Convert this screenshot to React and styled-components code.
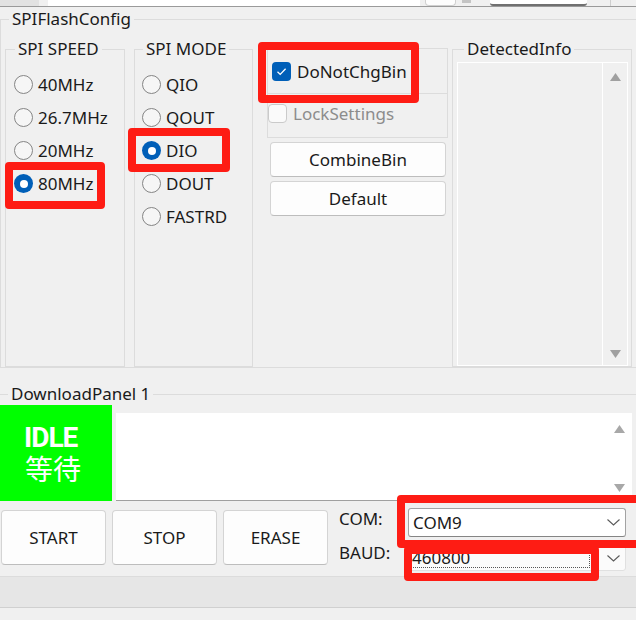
import React from 'react'
import styled, { createGlobalStyle } from 'styled-components'

const GlobalStyle = createGlobalStyle`
  html, body {
    margin: 0;
    padding: 0;
    background: #f0f0f0;
  }
  body {
    font-family: "Noto Sans", "Open Sans", sans-serif;
    font-size: 17px;
    color: #1a1a1a;
  }
`

const Window = styled.div`
  position: relative;
  width: 636px;
  height: 620px;
  overflow: hidden;
  background: #f0f0f0;
`

/* cut-off row of the previous panel */
const TopStrip = styled.div`
  display: flex;
  height: 6px;
  border-bottom: 1px solid #9a9a9a;
  margin-bottom: 1px;
`
const StripTab = styled.div`
  width: 39px;
  background: #e2e2e2;
`
const StripField = styled.div`
  width: 372px;
  margin-left: 9px;
  background: #fff;
`
const StripButton = styled.div`
  width: 31px;
  margin-left: 5px;
  box-sizing: border-box;
  background: #fdfdfd;
  border: 1px solid #d0d0d0;
  border-top: none;
  border-radius: 0 0 4px 4px;
`
const StripGlyph = styled.div`
  width: 9px;
  height: 3px;
  margin-left: 6px;
  background: #c4c4c4;
`
const StripCombo = styled.div`
  width: 97px;
  margin-left: 19px;
  box-sizing: border-box;
  background: #fff;
  border-bottom: 2px solid #707070;
  border-radius: 0 0 3px 3px;
`
const StripDivider = styled.div`
  width: 1px;
  margin-left: 23px;
  background: #cfcfcf;
`

const Group = styled.fieldset`
  margin: 0;
  padding: 0;
  min-width: 0;
  box-sizing: border-box;
  border: 1px solid #dcdcdc;
  flex: none;
  width: ${p => p.$w}px;
`
const Caption = styled.legend`
  margin-left: ${p => p.$indent}px;
  padding: 0 3px;
  line-height: 22px;
  font-size: 17px;
  color: #1a1a1a;
`

const ConfigGroup = styled(Group)`
  margin-top: 1px;
`
const ConfigBody = styled.div`
  display: flex;
  height: 329px;
  padding: 8px 0 0 4px;
`
const ColumnGap = styled.div`
  width: 9px;
  flex: none;
`

const RadioList = styled.div`
  display: flex;
  flex-direction: column;
  padding: 8px 0 0 ${p => p.$pad}px;
`
const RadioRow = styled.label`
  position: relative;
  display: flex;
  align-items: center;
  gap: 5px;
  height: 33px;
  white-space: nowrap;
`
const RadioDot = styled.span`
  flex: none;
  width: 19px;
  height: 19px;
  box-sizing: border-box;
  border-radius: 50%;
  border: ${p => (p.$on ? 'none' : '1.5px solid #858585')};
  background: ${p => (p.$on ? '#005fb8' : '#f6f6f6')};
  display: grid;
  place-items: center;

  &::after {
    content: '';
    display: ${p => (p.$on ? 'block' : 'none')};
    width: 8px;
    height: 8px;
    border-radius: 50%;
    background: #fff;
  }
`

const OptionsColumn = styled.div`
  flex: none;
  width: 199px;
  display: flex;
  flex-direction: column;
  padding: 10px 0 0 14px;
  box-sizing: border-box;
`
const OptBox = styled.div`
  position: relative;
  width: 181px;
  height: ${p => p.$h}px;
  box-sizing: border-box;
  border: 1px solid #dcdcdc;
  border-top: ${p => (p.$joined ? 'none' : '1px solid #dcdcdc')};
  display: flex;
  align-items: ${p => (p.$joined ? 'flex-start' : 'center')};
  padding: ${p => (p.$joined ? '8px 0 0 0' : '0 0 0 4px')};
`
const CheckRow = styled.label`
  display: flex;
  align-items: center;
  gap: 6px;
  white-space: nowrap;
  color: ${p => (p.$disabled ? '#8c8c8c' : '#1a1a1a')};
`
const CheckBox = styled.span`
  flex: none;
  width: 19px;
  height: 19px;
  box-sizing: border-box;
  border-radius: 4px;
  background: ${p => (p.$on ? '#005fb8' : '#fafafa')};
  border: ${p => (p.$on ? 'none' : '1px solid #cacaca')};
  display: grid;
  place-items: center;
`
const ButtonStack = styled.div`
  display: flex;
  flex-direction: column;
  gap: 4px;
  margin: 4px 0 0 3px;
`
const Button = styled.button`
  width: ${p => p.$w}px;
  height: ${p => p.$h}px;
  flex: none;
  padding: 0;
  font-family: inherit;
  font-size: 17px;
  color: #1a1a1a;
  background: #fdfdfd;
  border: 1px solid #d4d4d4;
  border-bottom-color: #bdbdbd;
  border-radius: 4px;
`

const ListBox = styled.div`
  display: flex;
  height: 304px;
  margin: 2px 3px 0 4px;
  box-sizing: border-box;
  border: 1px solid #fff;
  background: #f0f0f0;
`
const ListArea = styled.div`
  flex: 1;
`
const ScrollTrack = styled.div`
  width: 24px;
  border-left: 1px solid #fff;
  display: flex;
  flex-direction: column;
  justify-content: space-between;
  align-items: center;
  padding: ${p => p.$pad};
`

const DownloadGroup = styled(Group)`
  margin: 15px 0 0 -1px;
  padding-bottom: 5px;
`
const MonitorRow = styled.div`
  display: flex;
  align-items: flex-start;
`
const StatusTile = styled.div`
  width: 112px;
  height: 96px;
  flex: none;
  box-sizing: border-box;
  padding: 17px 0 0 24px;
  background: #00ff00;
  color: #fff;
  font-family: Roboto, "Noto Sans CJK SC", sans-serif;
  font-size: 28px;
  line-height: 31px;
`
const StatusWord = styled.b`
  font-weight: 700;
  letter-spacing: -1px;
`
const StatusHan = styled.span`
  font-family: "Noto Sans CJK SC", sans-serif;
  font-weight: 400;
  margin-left: 1px;
`
const LogArea = styled.div`
  display: flex;
  justify-content: flex-end;
  width: 516px;
  height: 88px;
  margin: 8px 0 0 4px;
  box-sizing: border-box;
  background: #fff;
  border-bottom: 1px solid #a0a0a0;
`
const LogScroll = styled.div`
  width: 22px;
  margin-right: 2px;
  display: flex;
  flex-direction: column;
  justify-content: space-between;
  align-items: center;
  padding: 12px 0 8px;
`

const ControlRow = styled.div`
  display: flex;
  align-items: flex-start;
  margin-top: 7px;
  padding-left: 1px;
`
const RunButtons = styled.div`
  display: flex;
  gap: 6px;
  margin-top: 2px;
`
const PortGrid = styled.div`
  display: grid;
  grid-template-columns: 69px 218px;
  grid-template-rows: 29px 26px;
  row-gap: 8px;
  margin-left: 11px;
`
const PortLabel = styled.span`
  align-self: start;
  margin-top: ${p => p.$shift}px;
  line-height: 23px;
`
const ComBox = styled.div`
  position: relative;
  height: 29px;
  box-sizing: border-box;
  display: flex;
  align-items: center;
  justify-content: space-between;
  padding: 0 5px 0 4px;
  background: #fff;
  border: 1px solid #a3a3a3;
  border-bottom-color: #858585;
  border-radius: 3px;
`
const BaudBox = styled.div`
  position: relative;
  height: 26px;
  box-sizing: border-box;
  display: flex;
  align-items: center;
  padding: 0 5px 0 2px;
  background: #fbfbfb;
  border: 1px solid #e0e0e0;
  border-radius: 3px;
`
const BaudValue = styled.span`
  width: 179px;
  height: 20px;
  margin-right: 17px;
  box-sizing: border-box;
  border: 1px dotted #555;
  line-height: 18px;
`

const StatusBar = styled.div`
  height: 30px;
  background: #e6e6e6;
  border-bottom: 1px solid #d0d0d0;
`

const Highlight = styled.span`
  position: absolute;
  left: ${p => p.$x}px;
  top: ${p => p.$y}px;
  width: ${p => p.$w}px;
  height: ${p => p.$h}px;
  box-sizing: border-box;
  border: 8px solid #fe1c14;
  border-radius: 4px;
  pointer-events: none;
  z-index: 3;
`

const Arrow = ({ up, color = '#a0a0a0' }) => (
  <svg width="11" height="8" viewBox="0 0 11 8">
    <polygon points={up ? '5.5,0 11,8 0,8' : '0,0 11,0 5.5,8'} fill={color} />
  </svg>
)

const Chevron = () => (
  <svg width="13" height="7" viewBox="0 0 13 7">
    <polyline points="0.5,0.5 6.5,6 12.5,0.5" fill="none" stroke="#5a5a5a" strokeWidth="1.1" />
  </svg>
)

const Tick = () => (
  <svg width="19" height="19" viewBox="0 0 19 19">
    <polyline points="5.5,9.8 8.2,12.4 13.6,6.8" fill="none" stroke="#fff" strokeWidth="1.3" />
  </svg>
)

const speeds = ['40MHz', '26.7MHz', '20MHz', '80MHz']
const modes = ['QIO', 'QOUT', 'DIO', 'DOUT', 'FASTRD']

const speedMark = { x: -9, y: -5, w: 100, h: 47 }
const modeMark = { x: -14, y: -6, w: 102, h: 44 }

const RadioGroup = ({ title, indent, pad, width, items, selected, mark }) => (
  <Group $w={width}>
    <Caption $indent={indent}>{title}</Caption>
    <RadioList $pad={pad}>
      {items.map(item => (
        <RadioRow key={item}>
          <RadioDot $on={item === selected} />
          {item}
          {item === selected && <Highlight $x={mark.x} $y={mark.y} $w={mark.w} $h={mark.h} />}
        </RadioRow>
      ))}
    </RadioList>
  </Group>
)

const App = () => {
  return (
    <Window>
      <GlobalStyle />
      <TopStrip>
        <StripTab />
        <StripField />
        <StripButton />
        <StripGlyph />
        <StripCombo />
        <StripDivider />
      </TopStrip>

      <ConfigGroup $w={640}>
        <Caption $indent={8}>SPIFlashConfig</Caption>
        <ConfigBody>
          <RadioGroup title="SPI SPEED" indent={9} pad={8} width={120}
            items={speeds} selected="80MHz" mark={speedMark} />
          <ColumnGap />
          <RadioGroup title="SPI MODE" indent={8} pad={7} width={119}
            items={modes} selected="DIO" mark={modeMark} />

          <OptionsColumn>
            <OptBox $h={46}>
              <CheckRow>
                <CheckBox $on><Tick /></CheckBox>
                DoNotChgBin
              </CheckRow>
              <Highlight $x={-10} $y={-7} $w={161} $h={61} />
            </OptBox>
            <OptBox $h={44} $joined>
              <CheckRow $disabled>
                <CheckBox />
                LockSettings
              </CheckRow>
            </OptBox>
            <ButtonStack>
              <Button $w={176} $h={35}>CombineBin</Button>
              <Button $w={176} $h={35}>Default</Button>
            </ButtonStack>
          </OptionsColumn>

          <Group $w={180}>
            <Caption $indent={11}>DetectedInfo</Caption>
            <ListBox>
              <ListArea />
              <ScrollTrack $pad="10px 0 7px">
                <Arrow up />
                <Arrow />
              </ScrollTrack>
            </ListBox>
          </Group>
        </ConfigBody>
      </ConfigGroup>

      <DownloadGroup $w={642}>
        <Caption $indent={8}>DownloadPanel 1</Caption>
        <MonitorRow>
          <StatusTile>
            <StatusWord>IDLE</StatusWord>
            <br />
            <StatusHan>等待</StatusHan>
          </StatusTile>
          <LogArea>
            <LogScroll>
              <Arrow up color="#a8a8a8" />
              <Arrow color="#a8a8a8" />
            </LogScroll>
          </LogArea>
        </MonitorRow>

        <ControlRow>
          <RunButtons>
            <Button $w={105} $h={55}>START</Button>
            <Button $w={105} $h={55}>STOP</Button>
            <Button $w={105} $h={55}>ERASE</Button>
          </RunButtons>
          <PortGrid>
            <PortLabel $shift={-1}>COM:</PortLabel>
            <ComBox>
              COM9
              <Chevron />
              <Highlight $x={-12} $y={-14} $w={250} $h={53} />
            </ComBox>
            <PortLabel $shift={-4}>BAUD:</PortLabel>
            <BaudBox>
              <BaudValue>460800</BaudValue>
              <Chevron />
              <Highlight $x={-5} $y={0} $w={195} $h={35} />
            </BaudBox>
          </PortGrid>
        </ControlRow>
      </DownloadGroup>

      <StatusBar />
    </Window>
  )
}

export default App
